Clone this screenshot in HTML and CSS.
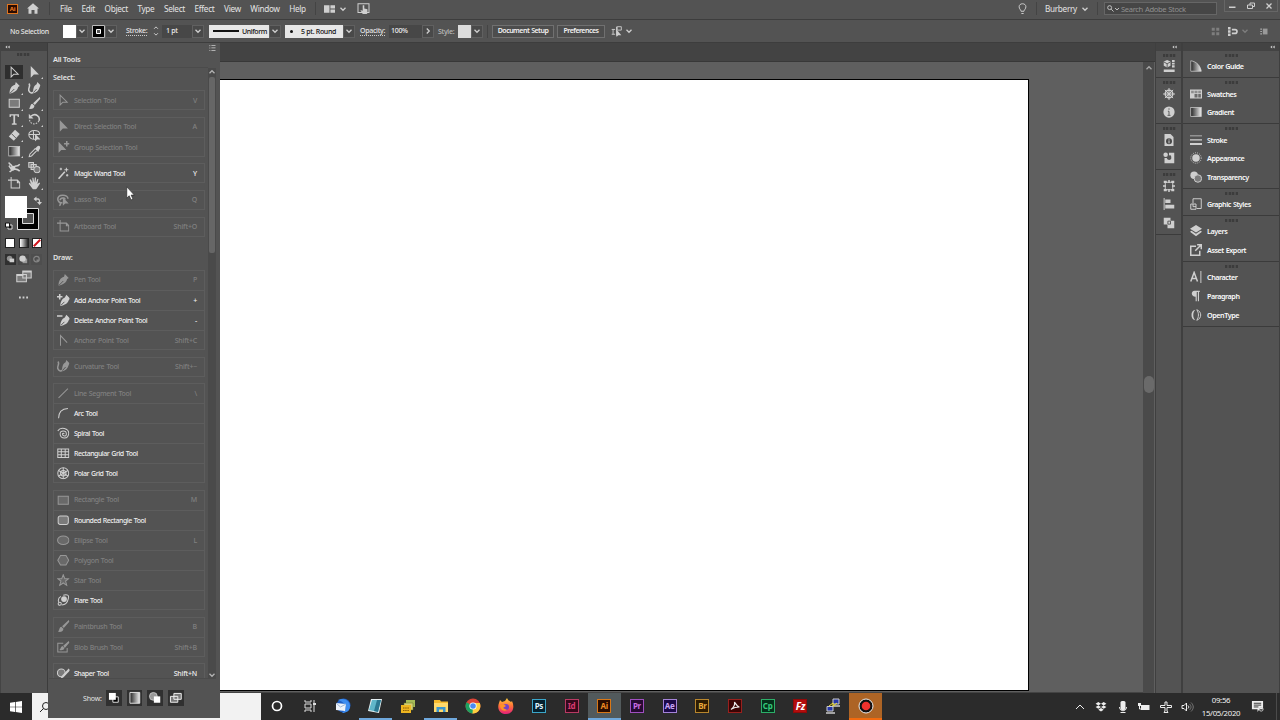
FILE: index.html
```html
<!DOCTYPE html>
<html lang="en">
<head>
    <meta charset="UTF-8">
    <meta name="viewport" content="width=device-width, initial-scale=1.0">
    <title>Illustrator - All Tools</title>
    <link rel="stylesheet" href="styles.css">
</head>
<body>
    <!-- icon sprite -->
    <svg class="sprite" xmlns="http://www.w3.org/2000/svg">
        <defs>
            <linearGradient id="grad"><stop offset="0" stop-color="#222"/><stop offset="1" stop-color="#eee"/></linearGradient>
            <linearGradient id="fox" x1="0" y1="0" x2="0" y2="1"><stop offset="0" stop-color="#ffcf3a"/><stop offset=".5" stop-color="#ff7139"/><stop offset="1" stop-color="#e3207a"/></linearGradient>
        </defs>
        <symbol id="chev" viewBox="0 0 16 16"><path class="ln heavy" d="M3 5.500l5 5 5-5"/></symbol>
        <symbol id="collapse" viewBox="0 0 16 12"><path class="fl" d="M7 1v10L1 6zM15 1v10L9 6z"/></symbol>
        <symbol id="select" viewBox="0 0 16 16"><path class="ln" d="M4 1.500v12.500l3.500-3.500H13z"/></symbol>
        <symbol id="direct" viewBox="0 0 16 16"><path class="fl" d="M3.500 0v15l4-4h6.500z"/></symbol>
        <symbol id="group" viewBox="0 0 16 16"><path class="fl" d="M2 1v14l3.500-3.500H12z"/><path class="ln thick" d="M12.500 0v7M9 3.500h7"/></symbol>
        <symbol id="wand" viewBox="0 0 16 16"><path class="ln thick" d="M2 15l8-9"/><path class="ln" d="M12 1v5M9.500 3.500h5M5 1v3M3.500 2.500h3M13 9v3M11.500 10.500h3"/></symbol>
        <symbol id="lasso" viewBox="0 0 16 16"><path class="ln thick" d="M7 11C3 12 1 9 1 6.500 1 3 4 1.500 7.500 1.500S14 3.500 14 6M4 8c0-3 7-4 6-1M3 11c2 0 2 3 0 4"/><path class="fl" d="M7.500 4v11l3-3H15z"/></symbol>
        <symbol id="shapeb" viewBox="0 0 16 16"><path class="ln" d="M10 13C5 14 1 11 1 7.500S4 2 8 2s7 2 7 5M1 7h14M7 2v11"/><path class="fl" d="M9 6v10l2.500-2.500H16z"/></symbol>
        <symbol id="artboard" viewBox="0 0 16 16"><path class="ln" d="M4 0v14h11V7l-3-3H0M12 4v3.500h3"/></symbol>
        <symbol id="pen" viewBox="0 0 16 16"><path class="fl" d="M10 0l5 5-2 1.500c-1 5-5 7-11 8.500C2 9 4 5 9 3.500z"/><path class="cut" d="M2.500 14.500L8 9"/></symbol>
        <symbol id="penadd" viewBox="0 0 16 16"><path class="fl" d="M12 1l5 5-2 2c-1 4-5 6-11 7.500C4.500 10 6 6 10 4.500z"/><path class="ln thick" d="M3.500 0v7M0 3.500h7"/><path class="cut" d="M5 14.500L9.500 10"/></symbol>
        <symbol id="pendel" viewBox="0 0 16 16"><path class="fl" d="M12 1l5 5-2 2c-1 4-5 6-11 7.500C4.500 10 6 6 10 4.500z"/><path class="ln thick" d="M0 2.500h7"/><path class="cut" d="M5 14.500L9.500 10"/></symbol>
        <symbol id="anchor" viewBox="0 0 16 16"><path class="ln" d="M4.500 15V2L13 11"/></symbol>
        <symbol id="curve" viewBox="0 0 16 16"><path class="fl" d="M12 0l4 4-1 2.500c-1 4.500-4 7-8.500 8C6.500 10 7 5 11 3z"/><path class="ln thick" d="M1 2c3 2-1 6 0 9s4 4 6 2"/><path class="cut" d="M7 13.500L11 9"/></symbol>
        <symbol id="line" viewBox="0 0 16 16"><path class="ln" d="M2 14L14 2"/></symbol>
        <symbol id="arc" viewBox="0 0 16 16"><path class="ln" d="M2 14.500C2 7 6 2.500 14 2"/></symbol>
        <symbol id="spiral" viewBox="0 0 16 16"><path class="ln" d="M1 5c4-6 14-3 14 3 0 8-11 8-11 1 0-5 8-5 8 0 0 4-5 3-5 0 0-1.500 2-1.500 2 0"/></symbol>
        <symbol id="rgrid" viewBox="0 0 16 16"><path class="ln" d="M1 2.500h14v11H1zM1 6h14M1 10h14M5.500 2.500v11M10.500 2.500v11"/></symbol>
        <symbol id="pgrid" viewBox="0 0 16 16"><circle class="ln" cx="8" cy="8" r="7"/><circle class="ln" cx="8" cy="8" r="3.500"/><path class="ln" d="M8 1v14M2 4.500l12 7M2 11.500l12-7"/></symbol>
        <symbol id="rect" viewBox="0 0 16 16"><path class="ln soft" d="M1.500 3h13v10h-13z"/></symbol>
        <symbol id="rrect" viewBox="0 0 16 16"><rect class="ln soft" x="1.500" y="2.500" width="13" height="11" rx="2.500"/></symbol>
        <symbol id="ellipse" viewBox="0 0 16 16"><ellipse class="ln soft" cx="8" cy="8" rx="7.300" ry="5.500"/></symbol>
        <symbol id="polygon" viewBox="0 0 16 16"><path class="ln soft" d="M4.500 2h7l3.500 6-3.500 6h-7L1 8z"/></symbol>
        <symbol id="star" viewBox="0 0 16 16"><path class="ln soft" d="M8 1l2 5h5l-4 3 1.500 5.500L8 11.500l-4.500 3L5 9 1 6h5z"/></symbol>
        <symbol id="flare" viewBox="0 0 16 16"><circle class="fl" cx="9" cy="6.500" r="3.700"/><path class="ln" d="M8 1.500c5-1.500 8 0 6.500 4.500C13.500 11 10 14 6 14M2 10c-1-4 1-6 3-7"/><circle class="ln" cx="3.500" cy="12.500" r="2"/></symbol>
        <symbol id="brush" viewBox="0 0 16 16"><path class="fl" d="M15 0L6.500 8l2.200 2.200L16 2zM5.500 8.500L8.300 11.300C8 15.500 4 15.500 1 15c2.500-1.500 1.500-6 4.500-6.500z"/></symbol>
        <symbol id="blob" viewBox="0 0 16 16"><path class="ln" d="M8 3H1v11h12V9"/><path class="fl" d="M15 0L8 6l2 3 6-7zM7 6.500L9.500 9C9 12 6 12 3 11.500 5 10 4.500 7.500 7 6.500z"/></symbol>
        <symbol id="shaper" viewBox="0 0 16 16"><circle class="ln soft" cx="5.500" cy="7.500" r="5"/><path class="fl" d="M15 2l2 2-9 9.500L4.500 15 6 11.500z"/></symbol>
        <symbol id="type" viewBox="0 0 16 16"><path class="fl" d="M2 1.500h12V5h-1.500L12 3.300H9.100V13l2 .5V15H4.900v-1.500l2-.5V3.300H4L3.500 5H2z"/></symbol>
        <symbol id="rotate" viewBox="0 0 16 16"><path class="ln thick" d="M4 4c6-5 12 1 10 6"/><path class="ln dash" d="M14 10c-3 6-12 5-12-2"/><path class="fl" d="M1 1v6h6z"/></symbol>
        <symbol id="eraser" viewBox="0 0 16 16"><path class="fl" d="M9 1l6 5.500L7.500 15 1 9.500z"/><path class="cut" d="M4.500 6l6 6"/></symbol>
        <symbol id="gradient" viewBox="0 0 16 16"><rect x="1" y="2" width="14" height="12" fill="url(#grad)" stroke="#ccc"/></symbol>
        <symbol id="eyedrop" viewBox="0 0 16 16"><path class="ln" d="M9 5L2.500 11.500 1.500 15l3-1L11 7.500"/><path class="fl" d="M8 4l5 5 1-2 1.500-3c1-3-2-4-3.500-2.500L9.500 4z"/></symbol>
        <symbol id="warp" viewBox="0 0 16 16"><path class="ln thick" d="M1 2c1 3 4 2 4 5M8 8c1-4 4 1 7-4M1 6c2 1 2 5 5 6M2 14c4-4 9-5 13-1"/><circle class="fl" cx="6.500" cy="9" r="3"/></symbol>
        <symbol id="blend" viewBox="0 0 16 16"><path class="ln soft" d="M1 2h6v6H1zM4 4.500h6.500V11H4z"/><circle class="ln soft" cx="11.500" cy="11" r="4"/></symbol>
        <symbol id="hand" viewBox="0 0 16 16"><path class="fl" d="M3.500 8L2 3.500l1.500-.5L6 7.500 5.500 1H7l1 6 .8-6.500h1.500L10 7.500l2-5 1.300.5L12 9l2.500-2 1 1-4 6.500L10 16H6.500L1 8.500 2 7.500l3 2.500z"/></symbol>
        <symbol id="screen" viewBox="0 0 20 16"><path class="ln soft" d="M1 5.500h12v9H1zM8.500 1H19v9H8.500z"/><path class="ln thick" d="M8.500 2H19M1 6.500h8"/></symbol>
        <symbol id="cube" viewBox="0 0 16 16"><path class="fl" d="M5.500 0L10 2v5.500L5.500 10 1 7.500V2z"/><path class="cut" d="M1 2.500L5.500 5 10 2.500M5.500 5v5"/><path class="fl" d="M12 0h3.500v2.500H12zM12 3.500h3.500V6H12zM12 7h3.500v3H12zM1 12.500h14.500V16H1z"/></symbol>
        <symbol id="wheel" viewBox="0 0 16 16"><circle class="ln thick" cx="8" cy="8" r="5"/><circle class="ln" cx="8" cy="8" r="1.500"/><path class="ln" d="M8 0v16M0 8h16M2.500 2.500l11 11M13.500 2.500l-11 11"/></symbol>
        <symbol id="info" viewBox="0 0 16 16"><circle class="fl" cx="8" cy="8" r="7.500"/><path class="cut thick" d="M8 3v2M6.500 7H8v5M6 12.500h4"/></symbol>
        <symbol id="docinfo" viewBox="0 0 16 16"><path class="fl" d="M2 0h8l4 4v12H2z"/><circle cx="8" cy="9.500" r="4" fill="#484848"/><path class="ln" d="M8 6.500v1M8 8.500v4"/></symbol>
        <symbol id="attr" viewBox="0 0 16 16"><path class="fl" d="M8 1h7v14H2V8h3c1 4 7 3 6-1C11 4 9 4 8 5z"/><circle class="fl" cx="3.500" cy="3.500" r="3"/></symbol>
        <symbol id="transform" viewBox="0 0 16 16"><path class="ln" d="M3 3h10v10H3z"/><path class="fl" d="M1 1h4v3H1zM11 1h4v3h-4zM1 12h4v3H1zM11 12h4v3h-4zM7 0h2v4H7zM7 12h2v4H7zM0 7h4v2H0zM12 7h4v2h-4z"/></symbol>
        <symbol id="align" viewBox="0 0 16 16"><path class="ln" d="M1.500 0v16"/><path class="fl" d="M3 2h7v4.500H3zM3 9h12v5H3z"/></symbol>
        <symbol id="path" viewBox="0 0 16 16"><path class="fl" d="M1 1h9v4h5v10H6v-5H1z"/><path class="cut" d="M6.500 9.500v-4H10v4z"/></symbol>
        <symbol id="guide" viewBox="0 0 16 16"><path d="M1 1c8 1 13 7 14 14H1z" fill="url(#grad)" stroke="#ccc"/></symbol>
        <symbol id="swatches" viewBox="0 0 16 16"><path class="fl" d="M0 2h16v12H0z"/><path d="M1.500 3.500H5V7H1.500zM6 3.500h4V7H6zM11 3.500h3.500V7H11z" fill="#8d8d8d"/><path d="M6 8h4v4.500H6zM11 8h3.500v4.500H11z" fill="#6b6b6b"/></symbol>
        <symbol id="stroke" viewBox="0 0 16 16"><path class="fl" d="M0 2h16v1H0zM0 7h16v1.700H0zM0 12h16v2.500H0z"/></symbol>
        <symbol id="appear" viewBox="0 0 16 16"><circle class="fl" cx="8" cy="8" r="5"/><circle class="ln dots" cx="8" cy="8" r="7"/></symbol>
        <symbol id="transp" viewBox="0 0 16 16"><circle class="fl" cx="5.500" cy="5.500" r="5"/><circle class="ln soft" cx="10.500" cy="10" r="5"/></symbol>
        <symbol id="gstyles" viewBox="0 0 16 16"><path class="ln" d="M4 7V1h11v13H9"/><path class="ln" d="M1 8h7v7H1zM4 8v3.500h4"/></symbol>
        <symbol id="layers" viewBox="0 0 16 16"><path class="fl" d="M8 0l8 5-8 5-8-5zM0 9l2-1.300 6 4 6-4L16 9l-8 6z"/></symbol>
        <symbol id="export" viewBox="0 0 16 16"><path class="ln thick" d="M8 3H1v12h12V9"/><path class="ln thick" d="M7 9l7-7M9.500 1H15v6"/></symbol>
        <symbol id="char" viewBox="0 0 16 16"><path class="ln thick" d="M1 14L5.500 2 10 14M2.500 10h6"/><path class="ln" d="M14.500 0v16"/></symbol>
        <symbol id="para" viewBox="0 0 16 16"><path class="fl" d="M6 1h7v1.500h-1V15h-1.500V2.500H9V15H7.500V9C1 9 1 1 6 1z"/></symbol>
        <symbol id="opent" viewBox="0 0 16 16"><path class="fl" d="M7 1C3 2 2 5 2 8s1 6 5 7C3.500 11 3.500 5 7 1z"/><path class="ln" d="M9 1c7 2 7 12 0 14 3-4 3-10 0-14z"/></symbol>
    </svg>

    <div class="app">
        <header class="menubar">
            <span class="ai-logo">Ai</span>
            <svg class="home" viewBox="0 0 16 14"><path class="fl" d="M8 0l8 7h-2v7h-4V9H6v5H2V7H0z"/></svg>
            <i class="sep"></i>
            <nav class="menu">
                <span>File</span><span>Edit</span><span>Object</span><span>Type</span><span>Select</span><span>Effect</span><span>View</span><span>Window</span><span>Help</span>
            </nav>
            <i class="sep sep-b"></i>
            <svg class="workspace" viewBox="0 0 12 8"><path class="fl" d="M0 0h6v8H0zM7 0h5v3.500H7zM7 4.500h5V8H7z"/></svg>
            <svg class="chev"><use href="#chev"/></svg>
            <svg class="touch" viewBox="0 0 16 14"><path class="ln" d="M1 1h14v11H1z"/><path class="fl" d="M7 3h2v4l4 1v5l-1 1H7L4 9l3 1z"/></svg>
            <div class="menu-right">
                <svg class="bulb" viewBox="0 0 12 16"><path class="ln" d="M4 11c0-2-2.500-3-2.500-6C1.500 2.500 3.500 1 6 1s4.500 1.500 4.500 4c0 3-2.500 4-2.500 6zM4.500 14h3"/></svg>
                <i class="sep"></i>
                <span class="user">Burberry</span>
                <svg class="chev"><use href="#chev"/></svg>
                <i class="sep sep-c"></i>
                <div class="search">
                    <svg class="lens" viewBox="0 0 16 16"><circle class="ln thick" cx="6" cy="6" r="4.500"/><path class="ln thick" d="M9.500 9.500L15 15"/></svg>
                    <svg class="chev small"><use href="#chev"/></svg>
                    <span>Search Adobe Stock</span>
                </div>
                <div class="window-buttons">
                    <svg viewBox="0 0 16 16"><path class="fl" d="M2 9h13v3H2z"/></svg>
                    <svg viewBox="0 0 16 16"><path class="ln thick" d="M6 6V2h9v7h-4M1 6h10v7H1z"/></svg>
                    <svg viewBox="0 0 16 16"><path class="ln heavy" d="M3 3l10 10M13 3L3 13"/></svg>
                </div>
            </div>
        </header>

        <div class="controlbar">
            <span class="no-selection">No Selection</span>
            <div class="combo"><i class="swatch"></i><b class="drop"><svg class="chev"><use href="#chev"/></svg></b></div>
            <div class="combo combo-stroke">
                <svg class="ring" viewBox="0 0 13 13"><path d="M.5.5h12v12H.5z" fill="#000" stroke="#bbb"/><path d="M4.500 4.500h4v4h-4z" fill="#555" stroke="#fff"/></svg>
                <b class="drop"><svg class="chev"><use href="#chev"/></svg></b>
            </div>
            <span class="label stroke-label">Stroke:</span>
            <div class="combo combo-weight">
                <svg class="stepper" viewBox="0 0 8 14"><path class="ln" d="M1.500 4L4 1.500 6.500 4M1.500 10L4 12.500 6.500 10"/></svg>
                <span class="field">1 pt</span><b class="drop"><svg class="chev"><use href="#chev"/></svg></b>
            </div>
            <div class="combo combo-profile"><span class="light"><i class="rule"></i>Uniform</span><b class="drop"><svg class="chev"><use href="#chev"/></svg></b></div>
            <div class="combo combo-brush"><span class="light"><i class="dot"></i>5 pt. Round</span><b class="drop"><svg class="chev"><use href="#chev"/></svg></b></div>
            <span class="label opacity-label">Opacity:</span>
            <div class="combo combo-opacity"><span class="field">100%</span><b class="drop"><svg class="chev side"><use href="#chev"/></svg></b></div>
            <span class="style-label">Style:</span>
            <div class="combo combo-style"><i class="swatch grey"></i><b class="drop"><svg class="chev"><use href="#chev"/></svg></b></div>
            <i class="sep"></i>
            <button class="btn doc-setup">Document Setup</button>
            <button class="btn prefs">Preferences</button>
            <svg class="similar" viewBox="0 0 16 16"><path class="ln" d="M1 5h5M1 12h5M3 5v7M9 1h6v5H9zM8 1v13"/><path class="fl" d="M8 5v11l2.500-2.500H15z"/></svg>
            <svg class="chev"><use href="#chev"/></svg>
            <div class="control-right">
                <svg class="c-grid" viewBox="0 0 12 12"><path class="fl" d="M1 1h4v4H1zM7 1h4v4H7zM1 7h4v4H1zM7 7h4v4H7z"/></svg>
                <svg class="c-snap" viewBox="0 0 16 14"><path class="fl" d="M1 0h4v4H1zM1 5h4v4H1zM1 10h4v4H1z"/><path class="ln heavy" d="M7 4h5c4 0 4 6 0 6H7"/></svg>
                <svg class="chev dim"><use href="#chev"/></svg>
                <svg class="c-list" viewBox="0 0 12 12"><path class="fl" d="M0 1h2v2H0zM0 5h2v2H0zM0 9h2v2H0z"/><path d="M4 1h8v10H4z" fill="#999"/></svg>
            </div>
        </div>

        <main class="workspace-area">
            <aside class="toolbar">
                <div class="collapse-bar"><svg><use href="#collapse"/></svg></div>
                <i class="grip"></i>
                <div class="tool-grid">
                    <span class="tool active"><svg><use href="#select"/></svg></span><span class="tool more"><svg><use href="#direct"/></svg></span>
                    <span class="tool more"><svg><use href="#pen"/></svg></span><span class="tool"><svg><use href="#curve"/></svg></span>
                    <span class="tool more"><svg><use href="#rect"/></svg></span><span class="tool more"><svg><use href="#brush"/></svg></span>
                    <span class="tool more"><svg><use href="#type"/></svg></span><span class="tool more"><svg><use href="#rotate"/></svg></span>
                    <span class="tool more"><svg><use href="#eraser"/></svg></span><span class="tool"><svg><use href="#shapeb"/></svg></span>
                    <span class="tool more"><svg><use href="#gradient"/></svg></span><span class="tool"><svg><use href="#eyedrop"/></svg></span>
                    <span class="tool"><svg><use href="#warp"/></svg></span><span class="tool"><svg><use href="#blend"/></svg></span>
                    <span class="tool"><svg><use href="#artboard"/></svg></span><span class="tool more"><svg><use href="#hand"/></svg></span>
                </div>
                <svg class="fill-stroke" viewBox="0 0 40 38">
                    <path d="M13.500 13.500h21v21h-21z" fill="#000" stroke="#ddd"/>
                    <path d="M18.500 18.500h11v10h-11z" fill="#535353" stroke="#ddd"/>
                    <path d="M1 1h22v22H1z" fill="#fff"/>
                    <path class="ln" d="M32 4h1.500c2 0 2 1 2 4"/><path class="fl" d="M32.500 1.500v5l-3-2.500zM33 7h5l-2.500 3z"/>
                    <path d="M4 30h4v4H4z" fill="#111" stroke="#ddd"/><path d="M1.500 28h4v4h-4z" fill="#fff" stroke="#111"/>
                </svg>
                <div class="mini-row paint">
                    <i class="solid"></i><i class="grad"></i>
                    <svg viewBox="0 0 10 10"><path d="M0 0h10v10H0z" fill="#fff"/><path d="M1 9l8-8" stroke="#d1141c" stroke-width="2.500"/></svg>
                </div>
                <div class="mini-row draw-modes">
                    <svg class="on" viewBox="0 0 12 12"><circle class="fl faded" cx="5" cy="5" r="3"/><path class="fl" d="M5 5h5v4H5z"/></svg>
                    <svg viewBox="0 0 12 12"><path class="fl faded" d="M5 5h5v5H5z"/><circle class="fl" cx="5" cy="5" r="3.500"/></svg>
                    <svg class="off" viewBox="0 0 12 12"><circle class="ln" cx="6" cy="5.500" r="3"/><path class="fl" d="M6 6h3v2H6z"/></svg>
                </div>
                <svg class="screen-mode"><use href="#screen"/></svg>
                <svg class="ellipsis" viewBox="0 0 10 3"><path class="fl" d="M0 .5h2v2H0zM4 .5h2v2H4zM8 .5h2v2H8z"/></svg>
            </aside>

            <section class="document">
                <div class="tabs"></div>
                <div class="viewport">
                    <div class="canvas"><div class="artboard"></div></div>
                    <div class="scrollbar"><svg class="chev up"><use href="#chev"/></svg><i class="thumb"></i></div>
                </div>
            </section>

            <aside class="dock dock-icons">
                <div class="collapse-bar right"><svg><use href="#collapse"/></svg></div>
                <div class="panel-group"><i class="grip"></i><span><svg><use href="#cube"/></svg></span></div>
                <div class="panel-group"><i class="grip"></i><span><svg><use href="#wheel"/></svg></span><span><svg><use href="#info"/></svg></span></div>
                <div class="panel-group"><i class="grip"></i><span><svg><use href="#docinfo"/></svg></span><span><svg><use href="#attr"/></svg></span></div>
                <div class="panel-group"><i class="grip"></i><span><svg><use href="#transform"/></svg></span><span><svg><use href="#align"/></svg></span><span><svg><use href="#path"/></svg></span></div>
            </aside>
            <aside class="dock dock-panels">
                <div class="collapse-bar right"><svg><use href="#collapse"/></svg></div>
                <div class="panel-group"><i class="grip"></i><span><svg><use href="#guide"/></svg>Color Guide</span></div>
                <div class="panel-group"><i class="grip"></i><span><svg><use href="#swatches"/></svg>Swatches</span><span><svg><use href="#gradient"/></svg>Gradient</span></div>
                <div class="panel-group"><i class="grip"></i><span><svg><use href="#stroke"/></svg>Stroke</span><span><svg><use href="#appear"/></svg>Appearance</span><span><svg><use href="#transp"/></svg>Transparency</span></div>
                <div class="panel-group"><i class="grip"></i><span><svg><use href="#gstyles"/></svg>Graphic Styles</span></div>
                <div class="panel-group"><i class="grip"></i><span><svg><use href="#layers"/></svg>Layers</span><span><svg><use href="#export"/></svg>Asset Export</span></div>
                <div class="panel-group"><i class="grip"></i><span><svg><use href="#char"/></svg>Character</span><span><svg><use href="#para"/></svg>Paragraph</span><span><svg><use href="#opent"/></svg>OpenType</span></div>
            </aside>
        </main>

        <footer class="taskbar">
            <div class="start"><svg viewBox="0 0 12 12"><path d="M0 1.700l5-.7v4.700H0zM5.700.9L12 0v5.700H5.700zM0 6.300h5V11l-5-.7zM5.700 6.300H12V12l-6.300-.9z" fill="#fff"/></svg></div>
            <div class="task-search"><svg viewBox="0 0 12 12"><circle cx="7" cy="5" r="3.500" fill="none" stroke="#222"/><path d="M4.500 7.500L1 11" stroke="#222"/></svg></div>
            <div class="task"><svg viewBox="0 0 16 16"><circle cx="8" cy="8" r="4.500" fill="none" stroke="#fff" stroke-width="1.700"/></svg></div>
            <div class="task"><svg viewBox="0 0 16 16"><path d="M3 2v2h6V2M3 14v-2h6v2M3 6h6v4H3zM12 2v12" fill="none" stroke="#ddd"/><path d="M11 5h3v2h-3z" fill="#ddd"/></svg></div>
            <div class="task"><svg viewBox="0 0 16 16"><circle cx="8.500" cy="7.500" r="7" fill="#1f5fc4"/><path d="M3 2c6-3 12 1 12 6s-4 7-8 7c7-5 3-11-4-13z" fill="#3d8df0"/><path d="M1 5l10 1-1 7-9-1z" fill="#eef3fa"/><path d="M1 5l4.500 4L11 6" fill="none" stroke="#9db6d6"/></svg></div>
            <div class="task open"><svg viewBox="0 0 16 16"><path d="M4 1h11l-3 14-11-2z" fill="#e4eff2"/><path d="M5 2h9l-3 12-9-2z" fill="#5fb6c9"/><path d="M10 2h4l-3 12-4-1z" fill="#2a7790"/></svg></div>
            <div class="task"><svg viewBox="0 0 16 16"><path d="M6 2h9v7H6z" fill="#a4ba57"/><path d="M4 5h9v7H4z" fill="#d6cf70" stroke="#596c29" stroke-width=".5"/><path d="M1 7h10v8H1z" fill="#edb520"/><path d="M3 10h6M3 12.500h6" stroke="#8a5c06" stroke-dasharray="1.500 .7"/></svg></div>
            <div class="task open"><svg viewBox="0 0 16 16"><path d="M1 2h6l1 1.500h7V14H1z" fill="#f5b92e"/><path d="M1 5h14v9H1z" fill="#ffd96b"/><path d="M3.500 14V9h9v5h-2.500v-2.500H6V14z" fill="#3a96cf"/></svg></div>
            <div class="task"><svg viewBox="0 0 16 16"><circle cx="8" cy="8" r="7.500" fill="#dd4437"/><path d="M8 8L1.500 4.300A7.500 7.500 0 0 0 8 15.500l3.500-6z" fill="#1ca261"/><path d="M8 8l-.5 7.500A7.500 7.500 0 0 0 14.800 5H8z" fill="#fdcf41"/><circle cx="8" cy="8" r="3.600" fill="#fff"/><circle cx="8" cy="8" r="2.800" fill="#4a8af4"/></svg></div>
            <div class="task"><svg viewBox="0 0 16 16"><path d="M1 5l1-3 2 2 3-1 2-3c1 3 3 3 4 4l1-1c3 6 1 13-6 13S-1 10 1 5z" fill="url(#fox)"/><circle cx="8" cy="9" r="3" fill="#7542c8"/><path d="M2 7c3-2 5 0 6 1l-3 2 4 2c-4 2-7-1-7-5z" fill="#ff9427"/></svg></div>
            <div class="task"><b class="adobe ps">Ps</b></div>
            <div class="task"><b class="adobe id">Id</b></div>
            <div class="task open current"><b class="adobe ai">Ai</b></div>
            <div class="task"><b class="adobe pr">Pr</b></div>
            <div class="task"><b class="adobe ae">Ae</b></div>
            <div class="task"><b class="adobe br">Br</b></div>
            <div class="task"><b class="adobe pdf"><svg viewBox="0 0 12 12"><path d="M2 9.500C5 7 6 4 5.500 2c2 3 3 5 5 5-3 0-5 0-8 2" fill="none" stroke="#eee" stroke-width="1.200"/></svg></b></div>
            <div class="task"><b class="adobe cp">Cp</b></div>
            <div class="task"><b class="adobe fz">Fz</b></div>
            <div class="task"><svg viewBox="0 0 16 16"><path d="M8 1h6v5H8zM2 8.500h6V13H2z" fill="#2536a8" stroke="#ccc"/><path d="M7.500 8h7.500M1 15h9" stroke="#ccc" stroke-width="1.500"/><path d="M4 8l4-3v3l4-3" fill="none" stroke="#f3e22c"/></svg></div>
            <div class="task recording"><svg viewBox="0 0 16 16"><circle cx="8" cy="8" r="7" fill="#111" stroke="#eee"/><circle cx="8" cy="8" r="4.300" fill="#f1322d"/></svg></div>
            <div class="tray">
                <svg viewBox="0 0 12 12"><path class="ln wht" d="M2 8l4-4 4 4"/></svg>
                <svg viewBox="0 0 12 12"><path class="wf" d="M3.300 1L6 2.700 3.300 4.400.6 2.700zM8.700 1l2.700 1.700-2.700 1.700L6 2.700zM3.300 4.400L6 6.100 3.300 7.800.6 6.100zM8.700 4.400l2.700 1.700-2.700 1.700L6 6.100zM6 7l2.700 1.700L6 10.500 3.300 8.700z"/></svg>
                <svg viewBox="0 0 12 12"><rect class="wf" x="3.500" y="0" width="5" height="9" rx="1.500"/><path class="ln wht" d="M2.500 6c0 5 7 5 7 0M3.500 11.500h5"/></svg>
                <svg viewBox="0 0 12 12"><path class="wf" d="M3 4h8.500v5H3zM0 2h3v3H0z"/><path class="ln wht" d="M1.500 5v3h2"/></svg>
                <svg viewBox="0 0 12 12"><path class="ln wht" d="M5 1h2v3.500h4.500v2H7V10l1 1.500H4L5 10V6.500H.5v-2H5z"/></svg>
                <svg viewBox="0 0 12 12"><path class="ln wht" d="M1 4.500h2L5.500 2v8L3 7.500H1zM7 4.500c1 1 1 2 0 3"/><path class="ln fade" d="M8.500 3c2 2 2 4 0 6M10 1.500c3 3 3 6 0 9"/></svg>
            </div>
            <div class="clock"><span>09:56</span><span>15/05/2020</span></div>
            <svg class="notify" viewBox="0 0 14 14"><path class="wf" d="M1 1h12v9H9l-2 3v-3H1z"/><path d="M3 3.500h8M3 5.500h8M3 7.500h5" stroke="#2b2b2b"/><circle cx="11" cy="10" r="2" fill="none" stroke="#ccc"/></svg>
            <i class="peek"></i>
        </footer>

        <!-- All Tools drawer, floats over the canvas and the taskbar -->
        <section class="drawer">
            <div class="drawer-head">
                <svg class="drawer-menu" viewBox="0 0 8 8"><path class="fl" d="M0 0h1v1.500H0zM0 3.200h1v1.300H0zM0 6.500h1V8H0zM2.500 0H8v1H2.500zM2.500 3.300H8v1H2.500zM2.500 6.700H8v1H2.500z"/></svg>
                <h1>All Tools</h1>
            </div>
            <div class="drawer-body">
                <div class="tool-list">
                    <h2>Select:</h2>
                    <ul><li class="used"><svg><use href="#select"/></svg>Selection Tool<kbd>V</kbd></li></ul>
                    <ul>
                        <li class="used"><svg><use href="#direct"/></svg>Direct Selection Tool<kbd>A</kbd></li>
                        <li class="used"><svg><use href="#group"/></svg>Group Selection Tool</li>
                    </ul>
                    <ul><li><svg><use href="#wand"/></svg>Magic Wand Tool<kbd>Y</kbd></li></ul>
                    <ul><li class="used"><svg><use href="#lasso"/></svg>Lasso Tool<kbd>Q</kbd></li></ul>
                    <ul><li class="used"><svg><use href="#artboard"/></svg>Artboard Tool<kbd>Shift+O</kbd></li></ul>
                    <h2 class="draw">Draw:</h2>
                    <ul>
                        <li class="used"><svg><use href="#pen"/></svg>Pen Tool<kbd>P</kbd></li>
                        <li><svg><use href="#penadd"/></svg>Add Anchor Point Tool<kbd>+</kbd></li>
                        <li><svg><use href="#pendel"/></svg>Delete Anchor Point Tool<kbd>-</kbd></li>
                        <li class="used"><svg><use href="#anchor"/></svg>Anchor Point Tool<kbd>Shift+C</kbd></li>
                    </ul>
                    <ul><li class="used"><svg><use href="#curve"/></svg>Curvature Tool<kbd>Shift+~</kbd></li></ul>
                    <ul>
                        <li class="used"><svg><use href="#line"/></svg>Line Segment Tool<kbd>\</kbd></li>
                        <li><svg><use href="#arc"/></svg>Arc Tool</li>
                        <li><svg><use href="#spiral"/></svg>Spiral Tool</li>
                        <li><svg><use href="#rgrid"/></svg>Rectangular Grid Tool</li>
                        <li><svg><use href="#pgrid"/></svg>Polar Grid Tool</li>
                    </ul>
                    <ul>
                        <li class="used"><svg><use href="#rect"/></svg>Rectangle Tool<kbd>M</kbd></li>
                        <li><svg><use href="#rrect"/></svg>Rounded Rectangle Tool</li>
                        <li class="used"><svg><use href="#ellipse"/></svg>Ellipse Tool<kbd>L</kbd></li>
                        <li class="used"><svg><use href="#polygon"/></svg>Polygon Tool</li>
                        <li class="used"><svg><use href="#star"/></svg>Star Tool</li>
                        <li><svg><use href="#flare"/></svg>Flare Tool</li>
                    </ul>
                    <ul>
                        <li class="used"><svg><use href="#brush"/></svg>Paintbrush Tool<kbd>B</kbd></li>
                        <li class="used"><svg><use href="#blob"/></svg>Blob Brush Tool<kbd>Shift+B</kbd></li>
                    </ul>
                    <ul><li><svg><use href="#shaper"/></svg>Shaper Tool<kbd>Shift+N</kbd></li></ul>
                </div>
                <div class="drawer-scroll">
                    <svg class="chev up"><use href="#chev"/></svg>
                    <i></i>
                    <svg class="chev"><use href="#chev"/></svg>
                </div>
            </div>
            <div class="drawer-foot">
                <span>Show:</span>
                <svg viewBox="0 0 16 16"><path d="M7 7h5.500v5.500H7z" fill="#000" stroke="#ddd"/><path d="M3 3h7v7H3z" fill="#fff"/></svg>
                <svg viewBox="0 0 16 16"><path d="M3 2.500h10v11H3z" fill="url(#grad)" stroke="#ddd"/></svg>
                <svg viewBox="0 0 16 16"><circle cx="6.500" cy="6.500" r="4" fill="#999" stroke="#ddd" stroke-width=".7"/><path d="M7 6.500h6.500V13H7z" fill="#fff"/></svg>
                <svg viewBox="0 0 16 16"><path d="M6 3.500h7.500v6H6zM2.500 6.500h7.500v6H2.500z" fill="#777" stroke="#eee"/></svg>
            </div>
        </section>

        <svg class="cursor" viewBox="0 0 8 14"><path d="M.5.8v10.500l2.300-2.200L4.500 13l1.800-.8-1.700-3.700h3z" fill="#fff" stroke="#222" stroke-width=".6"/></svg>
    </div>
</body>
</html>
```
FILE: styles.css
```css
* {
    margin: 0;
    padding: 0;
    box-sizing: border-box;
}

body {
    font-family: "Noto Sans", "Open Sans", sans-serif;
    font-size: 7px;
    color: #e4e4e4;
    background: #535353;
    overflow: hidden;
}

svg {
    display: block;
    flex: none;
    overflow: visible;
}

i, b {
    display: block;
    flex: none;
    font-style: normal;
}

.sprite {
    position: absolute;
    width: 0;
    height: 0;
}

/* icon paint */
.fl { fill: #cfcfcf; }
.ln { fill: none; stroke: #cfcfcf; stroke-width: 1.3; }
.thick { stroke-width: 2; }
.heavy { stroke-width: 2.6; }
.soft { fill: #7b7b7b; }
.cut { fill: none; stroke: #535353; stroke-width: 1.2; }
.dash { stroke-dasharray: 2 1.5; }
.dots { stroke-dasharray: 1.2 1.6; }
.faded { opacity: 0.6; }
.wht { stroke: #eee; stroke-width: 1; }
.wf { fill: #eee; }
.fade { stroke: #888; stroke-width: 0.8; }

.chev {
    width: 8px;
    height: 8px;
}
.chev.up { transform: rotate(180deg); }
.chev.side { transform: rotate(-90deg); }
.chev.dim { opacity: 0.35; }
.chev.small { width: 6px; height: 6px; }

.app {
    position: relative;
    width: 1280px;
    height: 720px;
    display: grid;
    grid-template-rows: 20px 23px 650px 27px;
}

.sep {
    width: 1px;
    height: 13px;
    background: #444;
}

/* menu bar */
.menubar {
    display: flex;
    align-items: center;
    padding: 0 0 2px 7px;
    background: #535353;
    border-bottom: 1px solid #3d3d3d;
    font-size: 8.2px;
    letter-spacing: -0.3px;
}

.ai-logo {
    width: 11px;
    height: 10px;
    line-height: 8px;
    text-align: center;
    font-size: 6px;
    font-weight: 700;
    color: #f57d20;
    background: #2a0b00;
    border: 1px solid #e0751f;
}

.home { width: 12px; height: 11px; margin: 0 10px 0 9px; }

.menu {
    display: flex;
    gap: 9.6px;
    width: 255px;
    margin-left: 10px;
    white-space: nowrap;
}

.sep-b { margin-right: 8px; }
.workspace { width: 11px; height: 8px; margin-right: 4px; }
.touch { width: 13px; height: 11px; margin-left: 10px; }

.menu-right {
    display: flex;
    align-items: center;
    align-self: stretch;
    margin-left: auto;
}

.bulb { width: 9px; height: 12px; margin-right: 9px; }
.user { width: 31px; margin: 0 5px 0 8px; }
.sep-c { margin: 0 6px 0 8px; }

.search {
    display: flex;
    align-items: center;
    width: 113px;
    height: 13px;
    padding-left: 2px;
    background: #464646;
    border: 1px solid #666;
    color: #909090;
    font-size: 7.6px;
    letter-spacing: -0.35px;
    word-spacing: 0.4px;
    white-space: nowrap;
}
.search span { margin-left: 1px; }
.lens { width: 7px; height: 7px; }

.window-buttons {
    display: flex;
    justify-content: space-between;
    align-self: flex-start;
    width: 54px;
    height: 12px;
    margin: 0 2px 0 7px;
    padding: 2px 4px 0 3px;
    border: 1px solid #666;
    border-top: 0;
}
.window-buttons svg { width: 8px; height: 8px; }

/* control bar */
.controlbar {
    display: flex;
    align-items: center;
    padding-left: 10px;
    border-bottom: 1px solid #3d3d3d;
    font-size: 7px;
    font-weight: 500;
    letter-spacing: -0.3px;
    white-space: nowrap;
}

.no-selection {
    width: 53px;
    letter-spacing: -0.25px;
}

.combo {
    display: flex;
    align-items: center;
    height: 13px;
}

.drop {
    display: flex;
    align-items: center;
    justify-content: center;
    width: 12px;
    height: 13px;
    background: #494949;
    border: 1px solid #606060;
}

.swatch { width: 13px; height: 13px; background: #fff; }
.swatch.grey { background: #dcdcdc; }
.ring { width: 13px; height: 13px; }

.field {
    height: 13px;
    padding-left: 3px;
    line-height: 12px;
    background: #474747;
    color: #eee;
}

.light {
    display: flex;
    align-items: center;
    height: 13px;
    background: #e6e6e6;
    color: #111;
}

.label {
    height: 10px;
    line-height: 10px;
    border-bottom: 1px dotted #ccc;
}

.combo-stroke { margin-left: 4px; }
.stroke-label { width: 21px; margin: 0 6px 0 9px; }
.stepper { width: 6px; height: 12px; margin-right: 3px; }
.combo-weight .field { width: 30px; padding-left: 4px; }
.combo-profile { margin-left: 5px; }
.combo-profile .light { width: 60px; padding-left: 4px; gap: 3px; letter-spacing: -0.4px; }
.rule { width: 26px; height: 1.5px; background: #111; }
.combo-brush { margin-left: 4px; }
.combo-brush .light { width: 58px; padding-left: 5px; gap: 8px; letter-spacing: -0.3px; }
.dot { width: 3px; height: 3px; border-radius: 50%; background: #111; }
.opacity-label { width: 25px; margin: 0 4px 0 5px; }
.combo-opacity .field { width: 33px; padding-left: 2px; }
.style-label { width: 20px; margin-left: 4px; color: #bbb; }
.controlbar > .sep { margin: 0 4px 0 4px; }

.btn {
    height: 13px;
    background: #4d4d4d;
    border: 1px solid #707070;
    color: #f2f2f2;
    font: 600 7px/10px "Noto Sans", sans-serif;
    letter-spacing: -0.5px;
    word-spacing: 0.6px;
}
.doc-setup { width: 62px; }
.prefs { width: 48px; margin-left: 3px; }
.similar { width: 11px; height: 11px; margin: 0 3px 0 6px; }

.control-right {
    display: flex;
    align-items: center;
    margin: 0 12px 0 auto;
}
.c-grid { width: 9px; height: 9px; opacity: 0.35; }
.c-snap { width: 11px; height: 9px; margin: 0 3px 0 7px; }
.c-list { width: 8px; height: 7px; margin-left: 11px; }

/* workspace */
.workspace-area {
    display: grid;
    grid-template-columns: 48px 1107px 27px 98px;
    background: #3f3f3f;
}

.collapse-bar {
    height: 8px;
    padding: 2px 0 0 4px;
    background: #434343;
}
.collapse-bar svg { width: 5px; height: 4px; }
.collapse-bar.right { padding-right: 4px; }
.collapse-bar.right svg { margin-left: auto; }

.grip {
    width: 13px;
    height: 3px;
    background: repeating-linear-gradient(90deg, #3c3c3c 0 2px, #4c4c4c 2px 3.5px);
}

.toolbar {
    background: #535353;
    border-left: 1px solid #444;
    border-right: 1px solid #3c3c3c;
}
.toolbar .grip { margin: 2px auto 8px 16px; }

.tool-grid {
    display: grid;
    grid-template-columns: 20px 20px;
    grid-auto-rows: 15.9px;
    margin-left: 3px;
}

.tool {
    position: relative;
    display: flex;
    align-items: center;
    justify-content: center;
}
.tool svg { width: 12.5px; height: 12.5px; }
.tool.active {
    width: 18px;
    height: 14px;
    margin: 1px;
    background: #2e2e2e;
}
.tool.more::after {
    content: "";
    position: absolute;
    right: 1px;
    bottom: 1px;
    border: 1px solid;
    border-color: transparent #ccc #ccc transparent;
}

.fill-stroke { width: 40px; height: 38px; margin: 4px 0 0 3px; }

.mini-row { display: flex; margin-left: 4px; }
.mini-row.paint { gap: 3.5px; margin-top: 5px; }
.paint > * {
    width: 10px;
    height: 10px;
    border: 1px solid #222;
}
.paint .solid { background: #fff; }
.paint .grad { background: linear-gradient(90deg, #fff, #222); }

.draw-modes { gap: 2px; margin: 6px 0 0 4px; }
.draw-modes svg { width: 11px; height: 11px; background: #494949; }
.draw-modes .on { background: #303030; }
.draw-modes .off { opacity: 0.4; }

.screen-mode { width: 16px; height: 13px; margin: 5px 0 0 15px; }
.ellipsis { width: 9px; height: 3px; margin: 13px 0 0 18px; }

.document {
    display: grid;
    grid-template-rows: 19px 631px;
    background: #5f5f5f;
}
.tabs {
    background: #434343;
    border-bottom: 1px solid #383838;
}
.viewport { display: flex; }
.canvas {
    width: 1095px;
    padding-top: 17px;
    border-bottom: 1px solid #444;
}
.artboard {
    width: 981px;
    height: 612px;
    background: #fff;
    border: 1px solid #000;
    border-left: 0;
}

.scrollbar {
    width: 11px;
    padding: 2px 1.5px;
    background: #4a4a4a;
}
.scrollbar .up { opacity: 0.7; }
.scrollbar .thumb {
    width: 10px;
    height: 17px;
    margin: 304px 0 0 -1px;
    border-radius: 5px;
    background: #6a6a6a;
}

.dock { background: #535353; }
.dock-icons { margin: 0 1px; }
.dock-panels { margin: 0 1px; }

.panel-group {
    display: flex;
    flex-direction: column;
    padding: 3px 0 1.65px;
    border-bottom: 1px solid #3b3b3b;
}
.panel-group .grip { margin: 0 auto 0 7px; }
.dock-panels .grip { margin-left: 42px; }

.panel-group span {
    display: flex;
    align-items: center;
    height: 18.67px;
    color: #fafafa;
    font-size: 7.2px;
    font-weight: 600;
    letter-spacing: -0.45px;
    word-spacing: 0.5px;
    white-space: nowrap;
}
.panel-group svg { width: 12px; height: 12px; margin-left: 7px; }
.dock-panels svg { margin-right: 5px; }
.dock-panels .collapse-bar svg { height: 4px; margin-right: 0; }

/* taskbar */
.taskbar {
    display: flex;
    align-items: center;
    background: #2b2b2b;
}

.start {
    width: 32px;
    padding-left: 10px;
}
.start svg { width: 12px; height: 12px; }

.task-search {
    display: flex;
    align-items: center;
    width: 229px;
    height: 27px;
    padding-left: 7px;
    background: #f2f2f2;
}
.task-search svg { width: 12px; height: 12px; }

.task {
    display: flex;
    align-items: center;
    justify-content: center;
    width: 32.7px;
    height: 27px;
    padding-bottom: 1px;
}
.task > svg { width: 16px; height: 16px; }
.task.open { box-shadow: inset 0 -2px #6fa8dc; }
.task.current { background: #525a5c; }
.task.recording {
    background: #ad6425;
    box-shadow: inset 0 -2px #f26a0e;
}

.adobe {
    width: 14px;
    height: 14px;
    line-height: 12px;
    text-align: center;
    font-size: 8px;
    letter-spacing: -0.3px;
    border: 1px solid;
}
.ps { color: #dff3ff; background: #062230; border-color: #3ba6c9; }
.id { color: #d83b70; background: #35081b; border-color: #b83a63; }
.ai { color: #ef8b22; background: #2a0d00; border-color: #d97716; }
.pr { color: #cb6ee6; background: #270a33; border-color: #9f4fc0; }
.ae { color: #c9a5f5; background: #1d0a49; border-color: #a483d8; }
.br { color: #e9a93b; background: #2e1c02; border-color: #b8862d; }
.pdf { background: #3a0505; border-color: #99201d; }
.cp { color: #35c97c; background: #05301b; border-color: #2cae68; }
.fz { color: #fff; background: #b30d0d; border-color: #8f0909; font-style: italic; font-size: 10px; }

.tray {
    display: flex;
    gap: 9.4px;
    margin-left: auto;
}
.tray svg { width: 12px; height: 12px; }

.clock {
    display: flex;
    flex-direction: column;
    gap: 3px;
    width: 46px;
    margin-left: 5px;
    padding-bottom: 1px;
    text-align: center;
    font-size: 7.8px;
    line-height: 10px;
    letter-spacing: -0.3px;
    color: #f2f2f2;
}
.notify { width: 13px; height: 13px; margin: 0 12px 0 7px; }
.peek {
    width: 1px;
    height: 27px;
    margin-right: 3px;
    background: #4b4b4b;
}

/* All Tools drawer */
.drawer {
    position: absolute;
    left: 48px;
    top: 43px;
    width: 172px;
    height: 675px;
    padding-left: 1px;
    background: #535353;
    display: grid;
    grid-template-rows: 25px 611px 39px;
}

.drawer-head {
    display: grid;
    padding: 2px 4px 0;
    margin-right: 12px;
    border-bottom: 1px solid #4b4b4b;
}
.drawer-head h1 {
    margin-top: -1px;
    font-size: 7.4px;
    font-weight: 600;
    line-height: 10px;
    letter-spacing: -0.25px;
}
.drawer-menu {
    width: 7px;
    height: 6px;
    margin: 0 -12px 0 auto;
}

.drawer-body { display: flex; }

.tool-list {
    width: 159px;
    padding: 4px 4px 0;
    overflow: hidden;
    border-bottom: 1px solid #4b4b4b;
}
.tool-list h2 {
    height: 18px;
    font-size: 7.2px;
    font-weight: 600;
    line-height: 10px;
    letter-spacing: -0.15px;
}
.tool-list h2.draw { padding-top: 9px; height: 26.63px; }

.tool-list ul {
    width: 152px;
    margin-bottom: 6.67px;
    list-style: none;
    outline: 1px solid #5d5d5d;
    outline-offset: -1px;
}
.tool-list li {
    display: flex;
    align-items: center;
    height: 20px;
    padding: 0 8px 0 4px;
    color: #eee;
    font-weight: 500;
    letter-spacing: -0.48px;
    word-spacing: 0.7px;
    white-space: nowrap;
}
.tool-list li + li { border-top: 1px solid #5d5d5d; }
.tool-list li svg { width: 12.5px; height: 12.5px; margin-right: 4.5px; }
.tool-list li.used {
    color: #808080;
    letter-spacing: -0.35px;
}
.tool-list li.used svg { opacity: 0.55; }
.tool-list kbd {
    margin-left: auto;
    font: inherit;
    letter-spacing: -0.2px;
}

.drawer-scroll {
    width: 8px;
    background: #4a4a4a;
    display: flex;
    flex-direction: column;
    align-items: center;
}
.drawer-scroll .chev { opacity: 0.8; }
.drawer-scroll i {
    width: 6px;
    height: 176px;
    margin: 1px 0 auto;
    border-radius: 2px;
    background: #666;
}

.drawer-foot {
    display: flex;
    align-items: center;
    gap: 5px;
    padding: 0 0 1px 34px;
}
.drawer-foot span {
    width: 18px;
    letter-spacing: -0.2px;
}
.drawer-foot svg { width: 15.7px; height: 15.7px; background: #303030; }

.cursor {
    position: absolute;
    left: 126px;
    top: 186px;
    width: 9px;
    height: 15px;
}
```
